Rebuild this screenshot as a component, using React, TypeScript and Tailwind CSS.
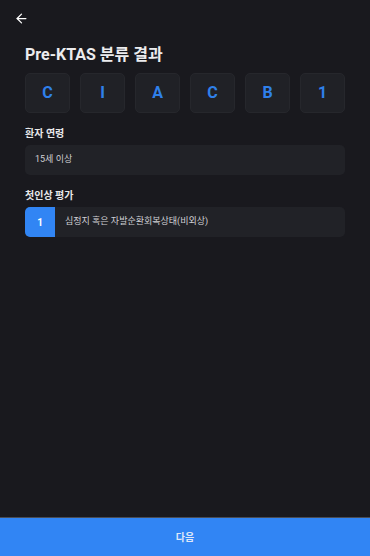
import React from 'react';
import { ArrowLeft } from 'lucide-react';

const codes = ['C', 'I', 'A', 'C', 'B', '1'];

export default function App() {
  return (
    <div
      className="flex h-[556px] w-[370px] flex-col bg-[#19191e] text-[#ececee]"
      style={{ fontFamily: 'Roboto, "Noto Sans CJK KR", sans-serif' }}
    >
      <div className="flex-1">
        <div className="px-[14px] pt-[11px]">
          <ArrowLeft className="h-[15px] w-[15px] text-white" strokeWidth={2} />
        </div>

        <div className="px-[25px] pt-[19px]">
          <h1 className="text-[16px] font-bold leading-[20px] text-[#ececee]">Pre-KTAS 분류 결과</h1>

          <div className="mt-[8px] grid grid-cols-6 gap-[10px]">
            {codes.map((c, i) => (
              <div
                key={i}
                className="flex h-[40px] items-center justify-center rounded-[5px] border border-[#26272c] bg-[#202126] text-[16px] font-bold text-[#2f80ea]"
              >
                {c}
              </div>
            ))}
          </div>

          <div className="mt-[14px] text-[10px] font-bold leading-[14px] text-[#e8e8ea]">환자 연령</div>
          <div className="mt-[4px] flex h-[30px] items-center rounded-[5px] bg-[#212227] px-[10px] text-[9px] text-[#d0d0d4]">
            15세 이상
          </div>

          <div className="mt-[14px] text-[10px] font-bold leading-[14px] text-[#e8e8ea]">첫인상 평가</div>
          <div className="mt-[4px] flex h-[30px] items-center overflow-hidden rounded-[5px] bg-[#212227]">
            <div className="flex h-full w-[30px] items-center justify-center bg-[#3185f4] text-[10px] font-bold text-white">
              1
            </div>
            <span className="pl-[10px] text-[9px] text-[#d0d0d4]">심정지 혹은 자발순환회복상태(비외상)</span>
          </div>
        </div>
      </div>

      <button className="h-[39px] w-full border-t border-[#4a4d55] bg-[#3185f4] text-[10px] font-bold text-[#dfe8f8]">
        다음
      </button>
    </div>
  );
}
